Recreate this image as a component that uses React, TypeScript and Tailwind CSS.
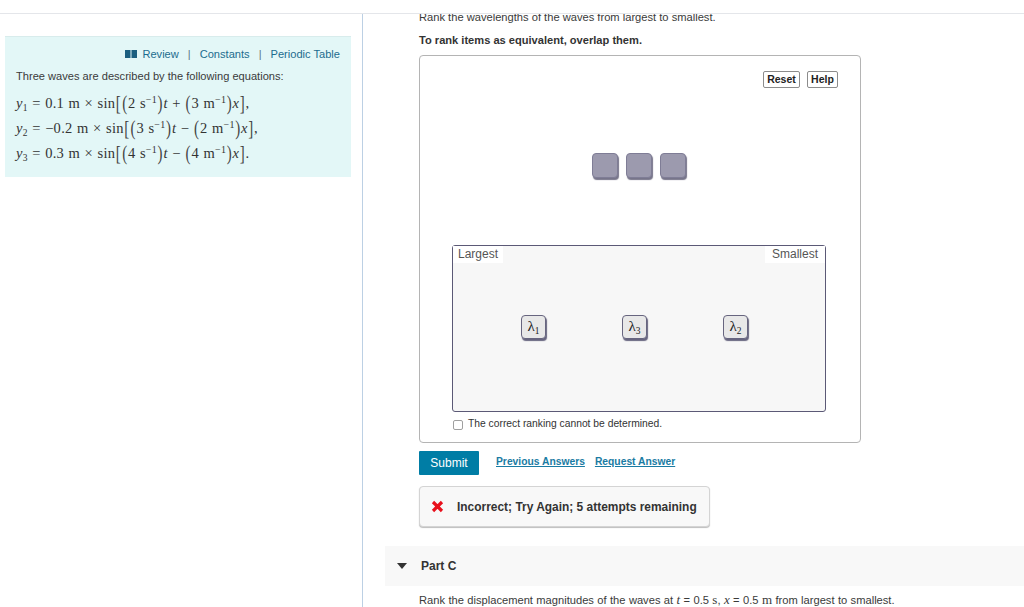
const serif = "font-['Liberation_Serif',serif]";

function Br({ children }: { children: string }) {
  return <span className="inline-block text-[15px] leading-none scale-y-[1.45] px-[0.5px] text-[#444]">{children}</span>;
}

function Sup({ children }: { children: string }) {
  return <span className="text-[10px] align-[5px] leading-none">{children}</span>;
}

function Sub({ children }: { children: string }) {
  return <span className="text-[9.5px] align-[-3px] leading-none">{children}</span>;
}

function Equation({ n, a, b, sb, c, end }: { n: string; a: string; b: string; sb: string; c: string; end: string }) {
  return (
    <div className={`${serif} h-[25px] flex items-center text-[14.5px] text-[#333] whitespace-pre [word-spacing:0.5px] tracking-[0.3px]`}>
      <span>
        <i>y</i>
        <Sub>{n}</Sub> = {a} m × sin<Br>[</Br>
        <Br>(</Br>
        {b} s<Sup>−1</Sup>
        <Br>)</Br>
        <i>t</i> {sb} <Br>(</Br>
        {c} m<Sup>−1</Sup>
        <Br>)</Br>
        <i>x</i>
        <Br>]</Br>
        {end}
      </span>
    </div>
  );
}

function EmptyTile() {
  return <div className="w-[26px] h-[25px] rounded-[4px] bg-[#9c9aae] border border-[#7f7d96] shadow-[1px_2px_1px_#77758a]" />;
}

function LambdaTile({ n }: { n: string }) {
  return (
    <div className={`${serif} w-[25px] h-[24px] rounded-[4px] bg-[#e8e8e8] border border-[#67657f] shadow-[1px_2px_1px_#67657f] flex items-center justify-center text-[15px] text-[#222]`}>
      <span className="-mt-[2px]">
        λ<Sub>{n}</Sub>
      </span>
    </div>
  );
}

export default function App() {
  return (
    <div className="w-[1024px] h-[607px] overflow-hidden bg-white text-[#333] font-['Liberation_Sans',Arial,sans-serif] flex flex-col">
      <div className="h-[14px] shrink-0 border-b border-[#e4e6ea]" />
      <div className="flex flex-1 min-h-0">
        <aside className="w-[363px] shrink-0 border-r border-[#bcd0e4] pt-[22px] pl-[5px] pr-[11px]">
          <div className="h-[141px] bg-[#e3f7f7] border-t border-[#d8ecec] pl-[11px] pr-[11px]">
            <div className="h-[33px] flex items-center justify-end pt-[1px] text-[11.1px] text-[#1c6c8e]">
              <svg width="12" height="8" viewBox="0 0 12 8" className="mr-[5px]">
                <path d="M0 0h5.500v8H0zM6.500 0H12v8H6.500z" fill="#1b5f80" />
              </svg>
              <span>Review</span>
              <span className="mx-[9px] text-[#5d7a85]">|</span>
              <span>Constants</span>
              <span className="mx-[9px] text-[#5d7a85]">|</span>
              <span>Periodic Table</span>
            </div>
            <p className="text-[11.1px] leading-[13px] mb-[8px] text-[#3a3a3a]">Three waves are described by the following equations:</p>
            <Equation n="1" a="0.1" b="2" sb="+" c="3" end="," />
            <Equation n="2" a="−0.2" b="3" sb="−" c="2" end="," />
            <Equation n="3" a="0.3" b="4" sb="−" c="4" end="." />
          </div>
        </aside>

        <main className="flex-1 min-w-0 overflow-hidden">
          <div className="pl-[56px] w-[498px]">
            <p className="text-[11.15px] leading-[13px] -mt-[3px] text-[#3a3a3a]">Rank the wavelengths of the waves from largest to smallest.</p>
            <p className="text-[11.1px] leading-[13px] mt-[10px] font-bold text-[#333]">To rank items as equivalent, overlap them.</p>

            <div className="mt-[8px] h-[388px] w-[442px] border border-[#b4b4b4] rounded-[4px] flex flex-col">
              <div className="flex justify-end gap-[7px] pt-[15px] pr-[22px]">
                <button className="h-[17px] w-[37px] bg-white border border-[#8c8c8c] rounded-[2px] text-[10.5px] font-bold text-[#222]">Reset</button>
                <button className="h-[17px] w-[31px] bg-white border border-[#8c8c8c] rounded-[2px] text-[10.5px] font-bold text-[#222]">Help</button>
              </div>
              <div className="flex gap-[8px] pl-[172px] mt-[65px]">
                <EmptyTile />
                <EmptyTile />
                <EmptyTile />
              </div>
              <div className="ml-[32px] mt-[67px] w-[374px] h-[167px] border border-[#5b5976] rounded-[3px] bg-[#f7f7f7]">
                <div className="flex justify-between text-[12px] leading-[16px] text-[#555]">
                  <span className="bg-white px-[5px] pb-[1px]">Largest</span>
                  <span className="bg-white px-[7px] pb-[1px]">Smallest</span>
                </div>
                <div className="flex gap-[76px] pl-[68px] mt-[52px]">
                  <LambdaTile n="1" />
                  <LambdaTile n="3" />
                  <LambdaTile n="2" />
                </div>
              </div>
              <div className="ml-[33px] mt-[5px] flex items-center gap-[5px] text-[10.3px] leading-[13px] text-[#333]">
                <span className="w-[10px] h-[10px] mt-[2px] rounded-[2px] bg-white border border-[#a0a0a0]" />
                <span>The correct ranking cannot be determined.</span>
              </div>
            </div>

            <div className="mt-[8px] flex items-center">
              <button className="w-[60px] h-[24px] bg-[#007da5] text-white text-[12px] rounded-[1px]">Submit</button>
              <a className="ml-[17px] -mt-[3px] text-[10.3px] font-bold text-[#1a7ba3] underline">Previous Answers</a>
              <a className="ml-[10px] -mt-[3px] text-[10.3px] font-bold text-[#1a7ba3] underline">Request Answer</a>
            </div>

            <div className="mt-[11px] w-[291px] h-[41px] border border-[#d4d4d4] rounded-[4px] bg-[#f8f8f8] shadow-[0_1px_1px_#bdbdbd] flex items-center pl-[11px]">
              <svg width="13" height="13" viewBox="0 0 13 13">
                <path d="M2 2l9 9M11 2l-9 9" stroke="#e8101c" strokeWidth="3.200" />
              </svg>
              <span className="ml-[13px] mt-[2px] text-[11.95px] font-bold text-[#333]">Incorrect; Try Again; 5 attempts remaining</span>
            </div>
          </div>

          <div className="mt-[19px] ml-[22px] h-[40px] bg-[#f8f8f8] flex items-center">
            <svg width="10" height="6" viewBox="0 0 10 6" className="ml-[12px]">
              <path d="M0 0h10L5 6z" fill="#333" />
            </svg>
            <span className="ml-[14px] text-[12px] font-bold text-[#333]">Part C</span>
          </div>

          <p className="pl-[56px] mt-[7px] text-[11.15px] leading-[14px] text-[#3a3a3a] whitespace-nowrap [word-spacing:0.3px]">
            Rank the displacement magnitudes of the waves at <i className={`${serif} text-[13px]`}>t</i> = 0.5 <span className={`${serif} text-[13px]`}>s</span>, <i className={`${serif} text-[13px]`}>x</i> = 0.5 <span className={`${serif} text-[13px]`}>m</span> from largest to smallest.
          </p>
        </main>
      </div>
    </div>
  );
}
